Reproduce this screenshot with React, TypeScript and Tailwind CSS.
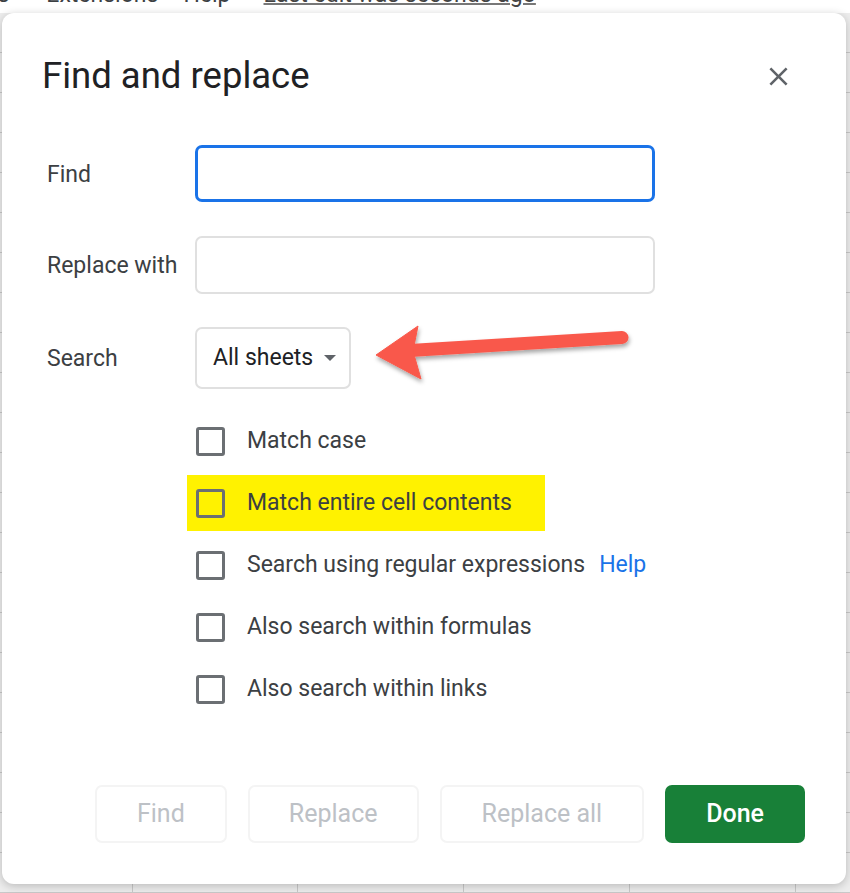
import React from "react";

function Checkbox() {
  return <div className="w-[29px] h-[29px] shrink-0 rounded-[3px] border-[3px] border-[#6b6f73]" />;
}

function CheckRow({ label, highlight, help }: { label: string; highlight?: boolean; help?: boolean }) {
  return (
    <div
      className={
        "flex items-center h-[56px] w-fit pl-[9px] " +
        (highlight ? "bg-[#fff200] pr-[33px]" : "pr-[10px]")
      }
    >
      <Checkbox />
      <span className="ml-[22px] text-[23px] leading-[28px] text-[#3c4043]">{label}</span>
      {help && <span className="ml-[14px] text-[23px] leading-[28px] text-[#1a73e8]">Help</span>}
    </div>
  );
}

export default function App() {
  const rows = Array.from({ length: 23 });
  const cols = [133, 165, 166, 166, 166, 166];
  return (
    <div className="relative w-[850px] h-[893px] overflow-hidden bg-[#ededed] font-['Roboto','Liberation_Sans',sans-serif]">
      {/* menu strip of the sheet behind */}
      <div className="h-[13px] overflow-hidden bg-white">
        <div className="flex items-start -mt-[17px] text-[23px] leading-[23px] text-[#3c4043] whitespace-nowrap">
          <span className="-ml-[47px]">Tools</span>
          <span className="ml-[37px]">Extensions</span>
          <span className="ml-[25px]">Help</span>
          <span className="ml-[33px] underline decoration-[#777] decoration-2 text-[#444]">Last edit was seconds ago</span>
        </div>
      </div>
      {/* sheet grid */}
      <div className="flex flex-col">
        {rows.map((_, i) => (
          <div key={i} className="flex h-[40px]">
            {cols.map((w, j) => (
              <div
                key={j}
                style={{ width: w }}
                className="shrink-0 border-r border-b border-[#c9c9c9]"
              />
            ))}
          </div>
        ))}
      </div>

      {/* dialog */}
      <div className="absolute left-[2px] top-[13px] w-[844px] h-[871px] rounded-[12px] bg-white shadow-[0_2px_10px_rgba(0,0,0,0.22)] flex flex-col pl-[40px] pr-[41px] pt-[41px]">
        <div className="flex items-center justify-between">
          <h1 className="text-[36.5px] leading-[44px] text-[#202124] font-normal">Find and replace</h1>
          <svg viewBox="0 0 24 24" className="w-[31px] h-[31px] mr-[11px]" fill="#5f6368">
            <path d="M19 6.41L17.59 5 12 10.59 6.41 5 5 6.41 10.59 12 5 17.59 6.41 19 12 13.41 17.59 19 19 17.59 13.41 12z" />
          </svg>
        </div>

        <div className="flex items-center mt-[47px]">
          <span className="w-[153px] pl-[5px] pt-[3px] text-[23px] text-[#3c4043]">Find</span>
          <div className="w-[460px] h-[57px] rounded-[7px] border-[3px] border-[#1a73e8]" />
        </div>

        <div className="flex items-center mt-[34px]">
          <span className="w-[153px] pl-[5px] pt-[2px] text-[23px] text-[#3c4043]">Replace with</span>
          <div className="w-[460px] h-[58px] rounded-[7px] border-2 border-[#e0e0e0]" />
        </div>

        <div className="flex items-center mt-[33px]">
          <span className="w-[153px] pl-[5px] pt-[2px] text-[23px] text-[#3c4043]">Search</span>
          <div className="flex items-center w-[156px] h-[62px] rounded-[7px] border-2 border-[#e0e0e0] pl-[16px]">
            <span className="text-[23px] text-[#202124]">All sheets</span>
            <svg viewBox="0 0 12 6" className="ml-[11px] w-[12px] h-[6px]" fill="#5f6368">
              <path d="M0 0h12L6 6z" />
            </svg>
          </div>
        </div>

        <div className="flex flex-col gap-[6px] mt-[24px] ml-[145px]">
          <CheckRow label="Match case" />
          <CheckRow label="Match entire cell contents" highlight />
          <CheckRow label="Search using regular expressions" help />
          <CheckRow label="Also search within formulas" />
          <CheckRow label="Also search within links" />
        </div>

        <div className="mt-auto pb-[41px] flex justify-end gap-[21px]">
          <button className="h-[58px] px-[40px] rounded-[7px] border-2 border-[#f4f4f4] text-[25px] text-[#bdc1c6]">Find</button>
          <button className="h-[58px] px-[39px] rounded-[7px] border-2 border-[#f4f4f4] text-[25px] text-[#bdc1c6]">Replace</button>
          <button className="h-[58px] px-[40px] rounded-[7px] border-2 border-[#f4f4f4] text-[25px] text-[#bdc1c6]">Replace all</button>
          <button className="h-[58px] px-[41px] rounded-[7px] bg-[#188038] text-[25px] font-medium text-white">Done</button>
        </div>
      </div>

      {/* red annotation arrow */}
      <svg className="absolute left-[370px] top-[320px]" width="275" height="75" viewBox="0 0 275 75">
        <defs>
          <filter id="sh" x="-10%" y="-30%" width="130%" height="180%">
            <feDropShadow dx="1" dy="3" stdDeviation="2" floodColor="#000" floodOpacity="0.35" />
          </filter>
        </defs>
        <g filter="url(#sh)" fill="#f9594b" stroke="#f9594b">
          <line x1="40" y1="30.5" x2="252" y2="17.5" strokeWidth="13" strokeLinecap="round" />
          <polygon points="6,35 48,6 43,31 51,59" strokeWidth="1" strokeLinejoin="round" />
        </g>
      </svg>
    </div>
  );
}
